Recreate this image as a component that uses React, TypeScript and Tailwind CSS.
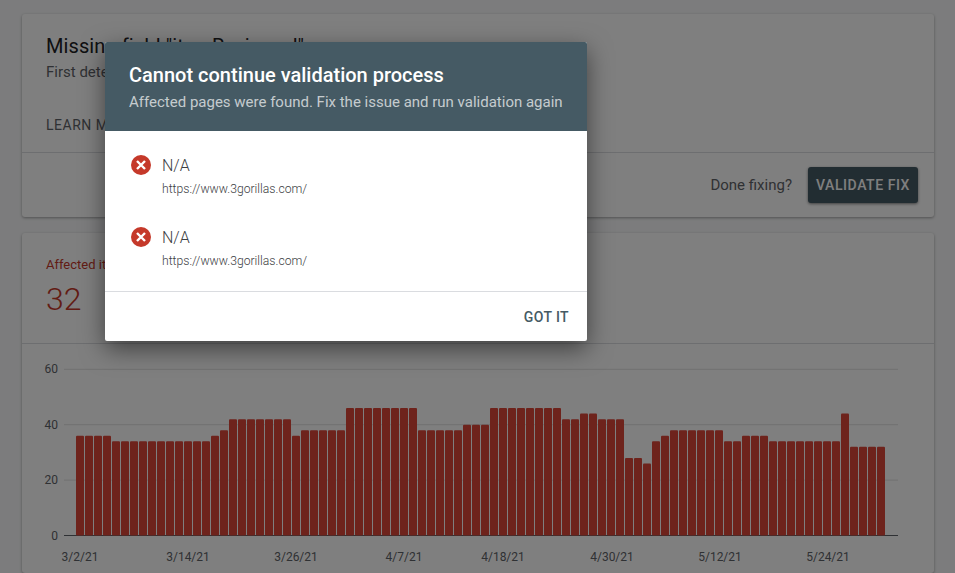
const runs: [number, number][] = [
  [36, 4], [34, 11], [36, 1], [38, 1], [42, 7], [36, 1], [38, 5], [46, 8], [38, 5], [40, 3],
  [46, 8], [42, 2], [44, 2], [42, 3], [28, 2], [26, 1], [34, 1], [36, 1], [38, 6], [34, 2],
  [36, 3], [34, 8], [44, 1], [32, 4],
];
const bars = runs.flatMap(([v, n]) => Array<number>(n).fill(v));
const yTicks = [60, 40, 20, 0];
const xTicks = ['3/2/21', '3/14/21', '3/26/21', '4/7/21', '4/18/21', '4/30/21', '5/12/21', '5/24/21'];
const xCenters = [80, 188, 296, 404, 503, 612, 720, 828];

const ErrorIcon = () => (
  <svg viewBox="0 0 20 20" className="w-5 h-5 shrink-0">
    <circle cx="10" cy="10" r="10" fill="#c5392a" />
    <path d="M6 6 14 14M14 6 6 14" stroke="#fff" strokeWidth="2.4" />
  </svg>
);

const Chart = () => {
  const zero = 535.5;
  const unit = 2.77;
  return (
    <svg width="955" height="229" viewBox="0 344 955 229" className="block -ml-[22px]">
      {yTicks.map((t) => {
        const y = zero - t * unit;
        return (
          <g key={t}>
            <line x1="64" x2="898" y1={y} y2={y} stroke={t === 0 ? '#5f6368' : '#e0e0e0'} />
            <text x="58" y={y + 4} textAnchor="end" fontSize="12" fill="#5f6368">{t}</text>
          </g>
        );
      })}
      {bars.map((v, i) => (
        <rect key={i} x={76 + i * 9} y={zero - v * unit} width="8" height={v * unit} rx="1" fill="#dc4639" />
      ))}
      {xTicks.map((t, i) => (
        <text key={t} x={xCenters[i]} y="561" textAnchor="middle" fontSize="12" fill="#5f6368">{t}</text>
      ))}
    </svg>
  );
};

export default function App() {
  return (
    <div className="relative h-[573px] w-[955px] overflow-hidden bg-[#f8f9fa] font-['Roboto',sans-serif]">
      <div className="flex flex-col gap-4 pl-[22px] pr-[21px] pt-[14px]">
        <section className="h-[203px] shrink-0 rounded-[3px] bg-white shadow-[0_1px_3px_rgba(0,0,0,0.35)]">
          <div className="h-[139px] border-b border-[#dadce0] px-6 pt-[18px]">
            <h2 className="text-xl leading-7 tracking-[0.08px] text-[#202124]">Missing field "itemReviewed"</h2>
            <p className="mt-[2px] text-[15px] leading-5 text-[#5f6368]">First detected: 3/2/21</p>
            <p className="mt-[33px] text-sm leading-5 tracking-[0.5px] text-[#5f6368]">LEARN MORE</p>
          </div>
          <div className="flex h-[64px] items-center justify-end gap-4 px-4">
            <span className="text-[15px] text-[#5f6368]">Done fixing?</span>
            <button className="h-9 w-[110px] rounded-[3px] bg-[#455a64] text-sm font-medium tracking-[0.55px] text-white shadow-[0_1px_3px_rgba(0,0,0,0.5)]">
              VALIDATE FIX
            </button>
          </div>
        </section>
        <section className="shrink-0 rounded-[3px] bg-white shadow-[0_1px_3px_rgba(0,0,0,0.35)]">
          <div className="h-[111px] border-b border-[#dadce0] px-6 pt-[17px]">
            <p className="text-[13px] leading-[30px] text-[#c5392a]">Affected items</p>
            <p className="mt-[1px] text-[32px] font-light leading-9 text-[#c5392a]">32</p>
          </div>
          <Chart />
        </section>
      </div>

      <div className="absolute inset-0 bg-black/50" />

      <div className="absolute left-[105px] top-[42px] w-[482px] overflow-hidden rounded-[2px] bg-white shadow-[0_8px_24px_rgba(0,0,0,0.5)]">
        <header className="h-[89px] bg-[#455a64] px-6 pt-[19px]">
          <h1 className="text-xl font-medium leading-7 text-white">Cannot continue validation process</h1>
          <p className="mt-[3px] text-[15px] leading-5 text-white/70">Affected pages were found. Fix the issue and run validation again</p>
        </header>
        <div className="flex h-[160px] flex-col gap-[29px] pl-[26px] pr-6 pt-6">
          {[0, 1].map((i) => (
            <div key={i} className="flex gap-[11px]">
              <ErrorIcon />
              <div>
                <div className="pt-[1px] text-base font-light leading-5 text-[#3c4043]">N/A</div>
                <div className="mt-[5px] text-[12.2px] font-light leading-[17px] text-[#3c4043]">https://www.3gorillas.com/</div>
              </div>
            </div>
          ))}
        </div>
        <footer className="flex h-[50px] items-center justify-end border-t border-[#dadce0] pr-[18px]">
          <button className="text-sm font-medium tracking-[0.4px] text-[#455a64]">GOT IT</button>
        </footer>
      </div>
    </div>
  );
}
